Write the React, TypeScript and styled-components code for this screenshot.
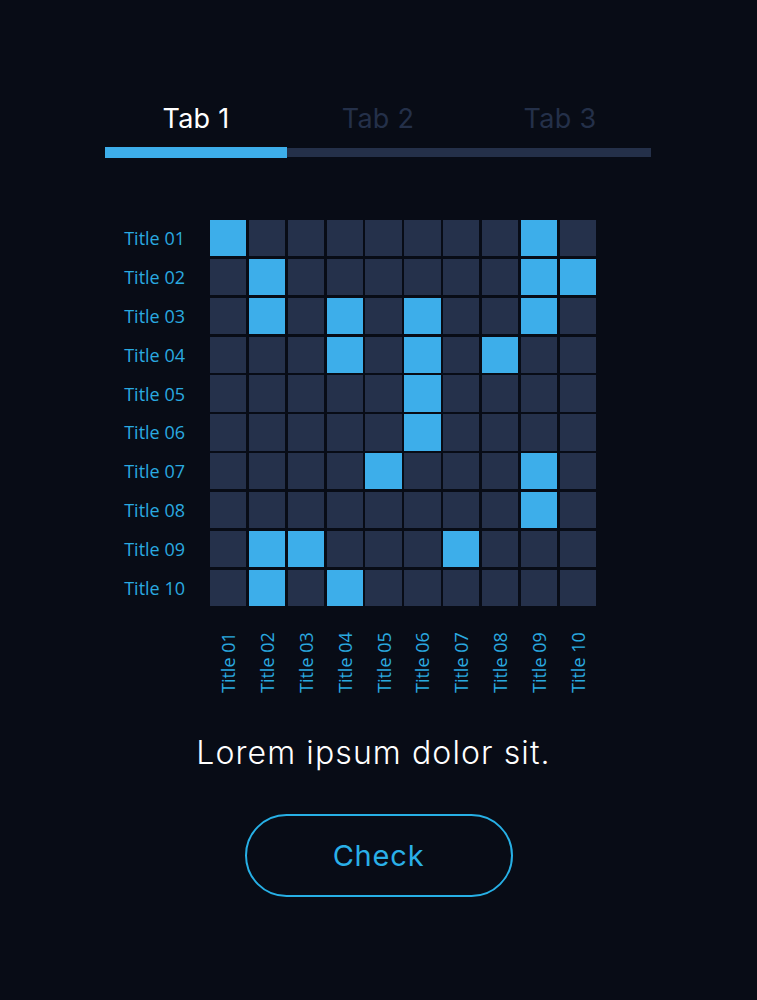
import React, { useState } from 'react';
import styled, { createGlobalStyle } from 'styled-components';

const GlobalStyle = createGlobalStyle`
   html, body {
      margin: 0;
      padding: 0;
      background: #080c16;
   }
   * {
      box-sizing: border-box;
   }
`;

const colors = {
   bg: '#080c16',
   cell: '#25314b',
   active: '#3daeea',
   label: '#2aaae0',
   dimTab: '#243049',
};

const titles = Array.from({ length: 10 }, (_, i) => `Title ${String(i + 1).padStart(2, '0')}`);

// [row, column] pairs that are switched on, 1-based
const marked: Array<[number, number]> = [
   [1, 1], [1, 9],
   [2, 2], [2, 9], [2, 10],
   [3, 2], [3, 4], [3, 6], [3, 9],
   [4, 4], [4, 6], [4, 8],
   [5, 6],
   [6, 6],
   [7, 5], [7, 9],
   [8, 9],
   [9, 2], [9, 3], [9, 7],
   [10, 2], [10, 4],
];

const isOn = (r: number, c: number) => marked.some(([mr, mc]) => mr === r && mc === c);

export default function App() {
   const [tab, setTab] = useState(0);

   return (
      <Page>
         <GlobalStyle />
         <Tabs>
            <TabRow>
               {['Tab 1', 'Tab 2', 'Tab 3'].map((t, i) => (
                  <Tab key={t} active={i === tab} onClick={() => setTab(i)}>
                     {t}
                  </Tab>
               ))}
            </TabRow>
            <Track>
               <Thumb style={{ left: `${(tab * 100) / 3}%` }} />
            </Track>
         </Tabs>

         <Matrix>
            <RowLabels>
               {titles.map((t) => (
                  <RowLabel key={t}>{t}</RowLabel>
               ))}
            </RowLabels>
            <Cells>
               {titles.map((_, r) =>
                  titles.map((__, c) => <Cell key={`${r}-${c}`} on={isOn(r + 1, c + 1)} />)
               )}
            </Cells>
            <span />
            <ColLabels>
               {titles.map((t) => (
                  <ColLabel key={t}>
                     <ColText>{t}</ColText>
                  </ColLabel>
               ))}
            </ColLabels>
         </Matrix>

         <Caption>Lorem ipsum dolor sit.</Caption>
         <CheckButton>Check</CheckButton>
      </Page>
   );
}

const Page = styled.div`
   width: 757px;
   height: 1000px;
   background: ${colors.bg};
   display: flex;
   flex-direction: column;
   align-items: center;
   padding-top: 99px;
   font-family: 'Inter', 'Lato', sans-serif;
`;

const Tabs = styled.div`
   width: 546px;
   margin-left: -1px;
`;

const TabRow = styled.div`
   display: grid;
   grid-template-columns: repeat(3, 1fr);
   height: 40px;
`;

const Tab = styled.button<{ active: boolean }>`
   background: none;
   border: none;
   padding: 0;
   font-family: inherit;
   font-size: 27px;
   font-weight: 400;
   letter-spacing: 0.3px;
   line-height: 40px;
   color: ${(p) => (p.active ? '#ffffff' : colors.dimTab)};
   cursor: pointer;
`;

const Track = styled.div`
   position: relative;
   height: 9px;
   margin-top: 9px;
   background: ${colors.dimTab};
`;

const Thumb = styled.div`
   position: absolute;
   top: -1px;
   width: 33.333%;
   height: 11px;
   background: ${colors.active};
   transition: left 0.2s;
`;

const Matrix = styled.div`
   align-self: flex-start;
   display: grid;
   grid-template-columns: 80px 386px;
   column-gap: 25px;
   margin-top: 63px;
   margin-left: 105px;
`;

const RowLabels = styled.div`
   display: grid;
   grid-template-rows: repeat(10, 1fr);
   row-gap: 2.6px;
`;

const RowLabel = styled.div`
   display: flex;
   align-items: center;
   justify-content: flex-end;
   font-family: 'Open Sans', 'Noto Sans', sans-serif;
   font-size: 18px;
   color: ${colors.label};
`;

const Cells = styled.div`
   display: grid;
   grid-template-columns: repeat(10, 1fr);
   grid-template-rows: repeat(10, 1fr);
   gap: 2.6px;
   width: 386px;
   height: 386px;
`;

const Cell = styled.div<{ on: boolean }>`
   background: ${(p) => (p.on ? colors.active : colors.cell)};
`;

const ColLabels = styled.div`
   display: grid;
   grid-template-columns: repeat(10, 1fr);
   column-gap: 2.6px;
   margin-top: 20px;
`;

const ColLabel = styled.div`
   display: flex;
   justify-content: center;
   height: 67px;
`;

const ColText = styled.span`
   writing-mode: vertical-rl;
   transform: rotate(180deg);
   text-align: start;
   font-family: 'Open Sans', 'Noto Sans', sans-serif;
   font-size: 18px;
   line-height: 20px;
   color: ${colors.label};
`;

const Caption = styled.p`
   margin: 40px 0 0;
   font-size: 32px;
   font-weight: 300;
   letter-spacing: 1.1px;
   color: #ffffff;
   margin-left: -10px;
`;

const CheckButton = styled.button`
   margin-top: 42px;
   width: 268px;
   height: 83px;
   border: 2.5px solid #27b0e6;
   border-radius: 42px;
   background: transparent;
   font-family: inherit;
   font-size: 29px;
   font-weight: 400;
   letter-spacing: 0.8px;
   color: #2ab0e8;
   cursor: pointer;
`;
